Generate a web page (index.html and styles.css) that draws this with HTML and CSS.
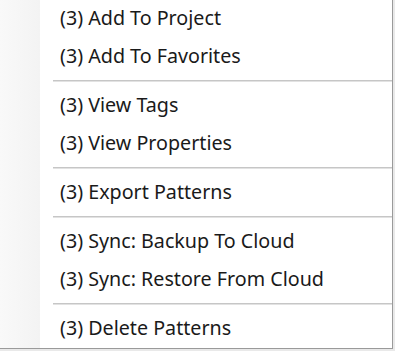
FILE: index.html
```html
<!DOCTYPE html>
<html>
<head>
<meta charset="utf-8">
<link rel="stylesheet" href="styles.css">
</head>
<body>
<div class="frame">
  <div class="menu">
    <div class="strip"></div>
    <div class="items">
      <div class="item">(3) Add To Project</div>
      <div class="item">(3) Add To Favorites</div>
      <div class="sep"></div>
      <div class="item">(3) View Tags</div>
      <div class="item">(3) View Properties</div>
      <div class="sep"></div>
      <div class="item">(3) Export Patterns</div>
      <div class="sep"></div>
      <div class="item">(3) Sync: Backup To Cloud</div>
      <div class="item">(3) Sync: Restore From Cloud</div>
      <div class="sep"></div>
      <div class="item">(3) Delete Patterns</div>
    </div>
  </div>
</div>
</body>
</html>
```
FILE: styles.css
```css
html, body {
  margin: 0;
  padding: 0;
  background: #e9e9e9;
}
.frame {
  width: 395px;
  height: 351px;
  overflow: hidden;
}
.menu {
  width: 392px;
  height: 348px;
  display: flex;
  background: #ffffff;
  border-right: 1px solid #9a9a9a;
  border-bottom: 1px solid #9a9a9a;
}
.strip {
  width: 40px;
  flex: none;
  background: linear-gradient(to right, #f9f9f9, #f3f3f3);
}
.items {
  flex: 1;
  display: flex;
  flex-direction: column;
}
.item {
  height: 36px;
  line-height: 36px;
  padding-bottom: 2px;
  padding-left: 20px;
  font-family: "Noto Sans", "Open Sans", sans-serif;
  font-size: 19.7px;
  color: #1a1a1a;
  white-space: nowrap;
}
.sep {
  margin: 4px 0 5px 13px;
  height: 0;
  border-top: 1px solid #c6c6c6;
  border-bottom: 1px solid #e2e2e2;
}
```
